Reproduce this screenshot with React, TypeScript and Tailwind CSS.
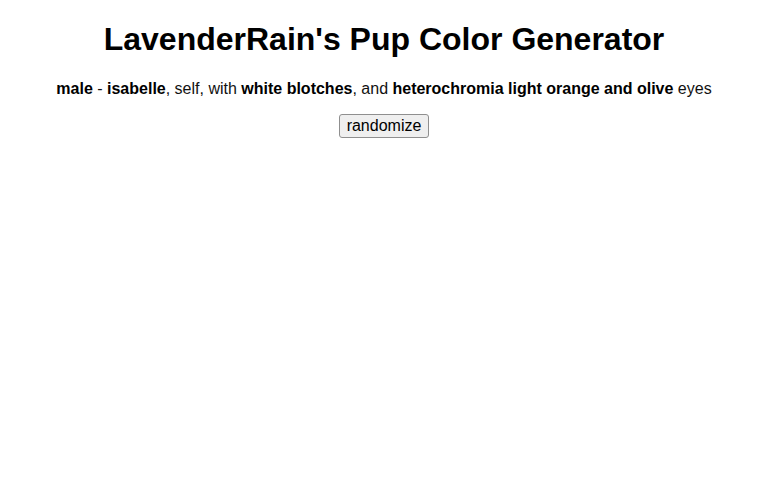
import React, { useState } from 'react';

const sexes = ['male', 'female'];
const bases = ['isabelle', 'black', 'chocolate', 'blue', 'cream', 'red', 'sable'];
const patterns = ['self', 'brindle', 'merle', 'tuxedo', 'piebald'];
const markings = ['white blotches', 'white socks', 'a white blaze', 'tan points'];
const eyes = [
  'heterochromia light orange and olive',
  'amber',
  'dark brown',
  'blue',
  'heterochromia blue and brown',
];

const pick = (list: string[]) => list[Math.floor(Math.random() * list.length)];

const App = () => {
  const [pup, setPup] = useState({
    sex: 'male',
    base: 'isabelle',
    pattern: 'self',
    marking: 'white blotches',
    eye: 'heterochromia light orange and olive',
  });

  const randomize = () =>
    setPup({
      sex: pick(sexes),
      base: pick(bases),
      pattern: pick(patterns),
      marking: pick(markings),
      eye: pick(eyes),
    });

  return (
    <div className="min-h-[480px] bg-white text-[#111] text-center font-['Liberation_Sans',Arial,sans-serif] text-base leading-[normal] px-2">
      {/* Title */}
      <h1 className="text-[32px] font-bold text-black my-[21.44px]">LavenderRain's Pup Color Generator</h1>

      {/* Description */}
      <p className="my-4">
        <b className="text-black">{pup.sex}</b> - <b className="text-black">{pup.base}</b>, {pup.pattern}, with{' '}
        <b className="text-black">{pup.marking}</b>, and <b className="text-black">{pup.eye}</b> eyes
      </p>

      <p className="my-4">
        <button
          onClick={randomize}
          className="bg-[#efefef] border border-[#8f8f8f] rounded-[3px] px-[7px] py-[2px] text-base text-black leading-[normal] hover:bg-[#e5e5e5]"
        >
          randomize
        </button>
      </p>
    </div>
  );
};

export default App;
